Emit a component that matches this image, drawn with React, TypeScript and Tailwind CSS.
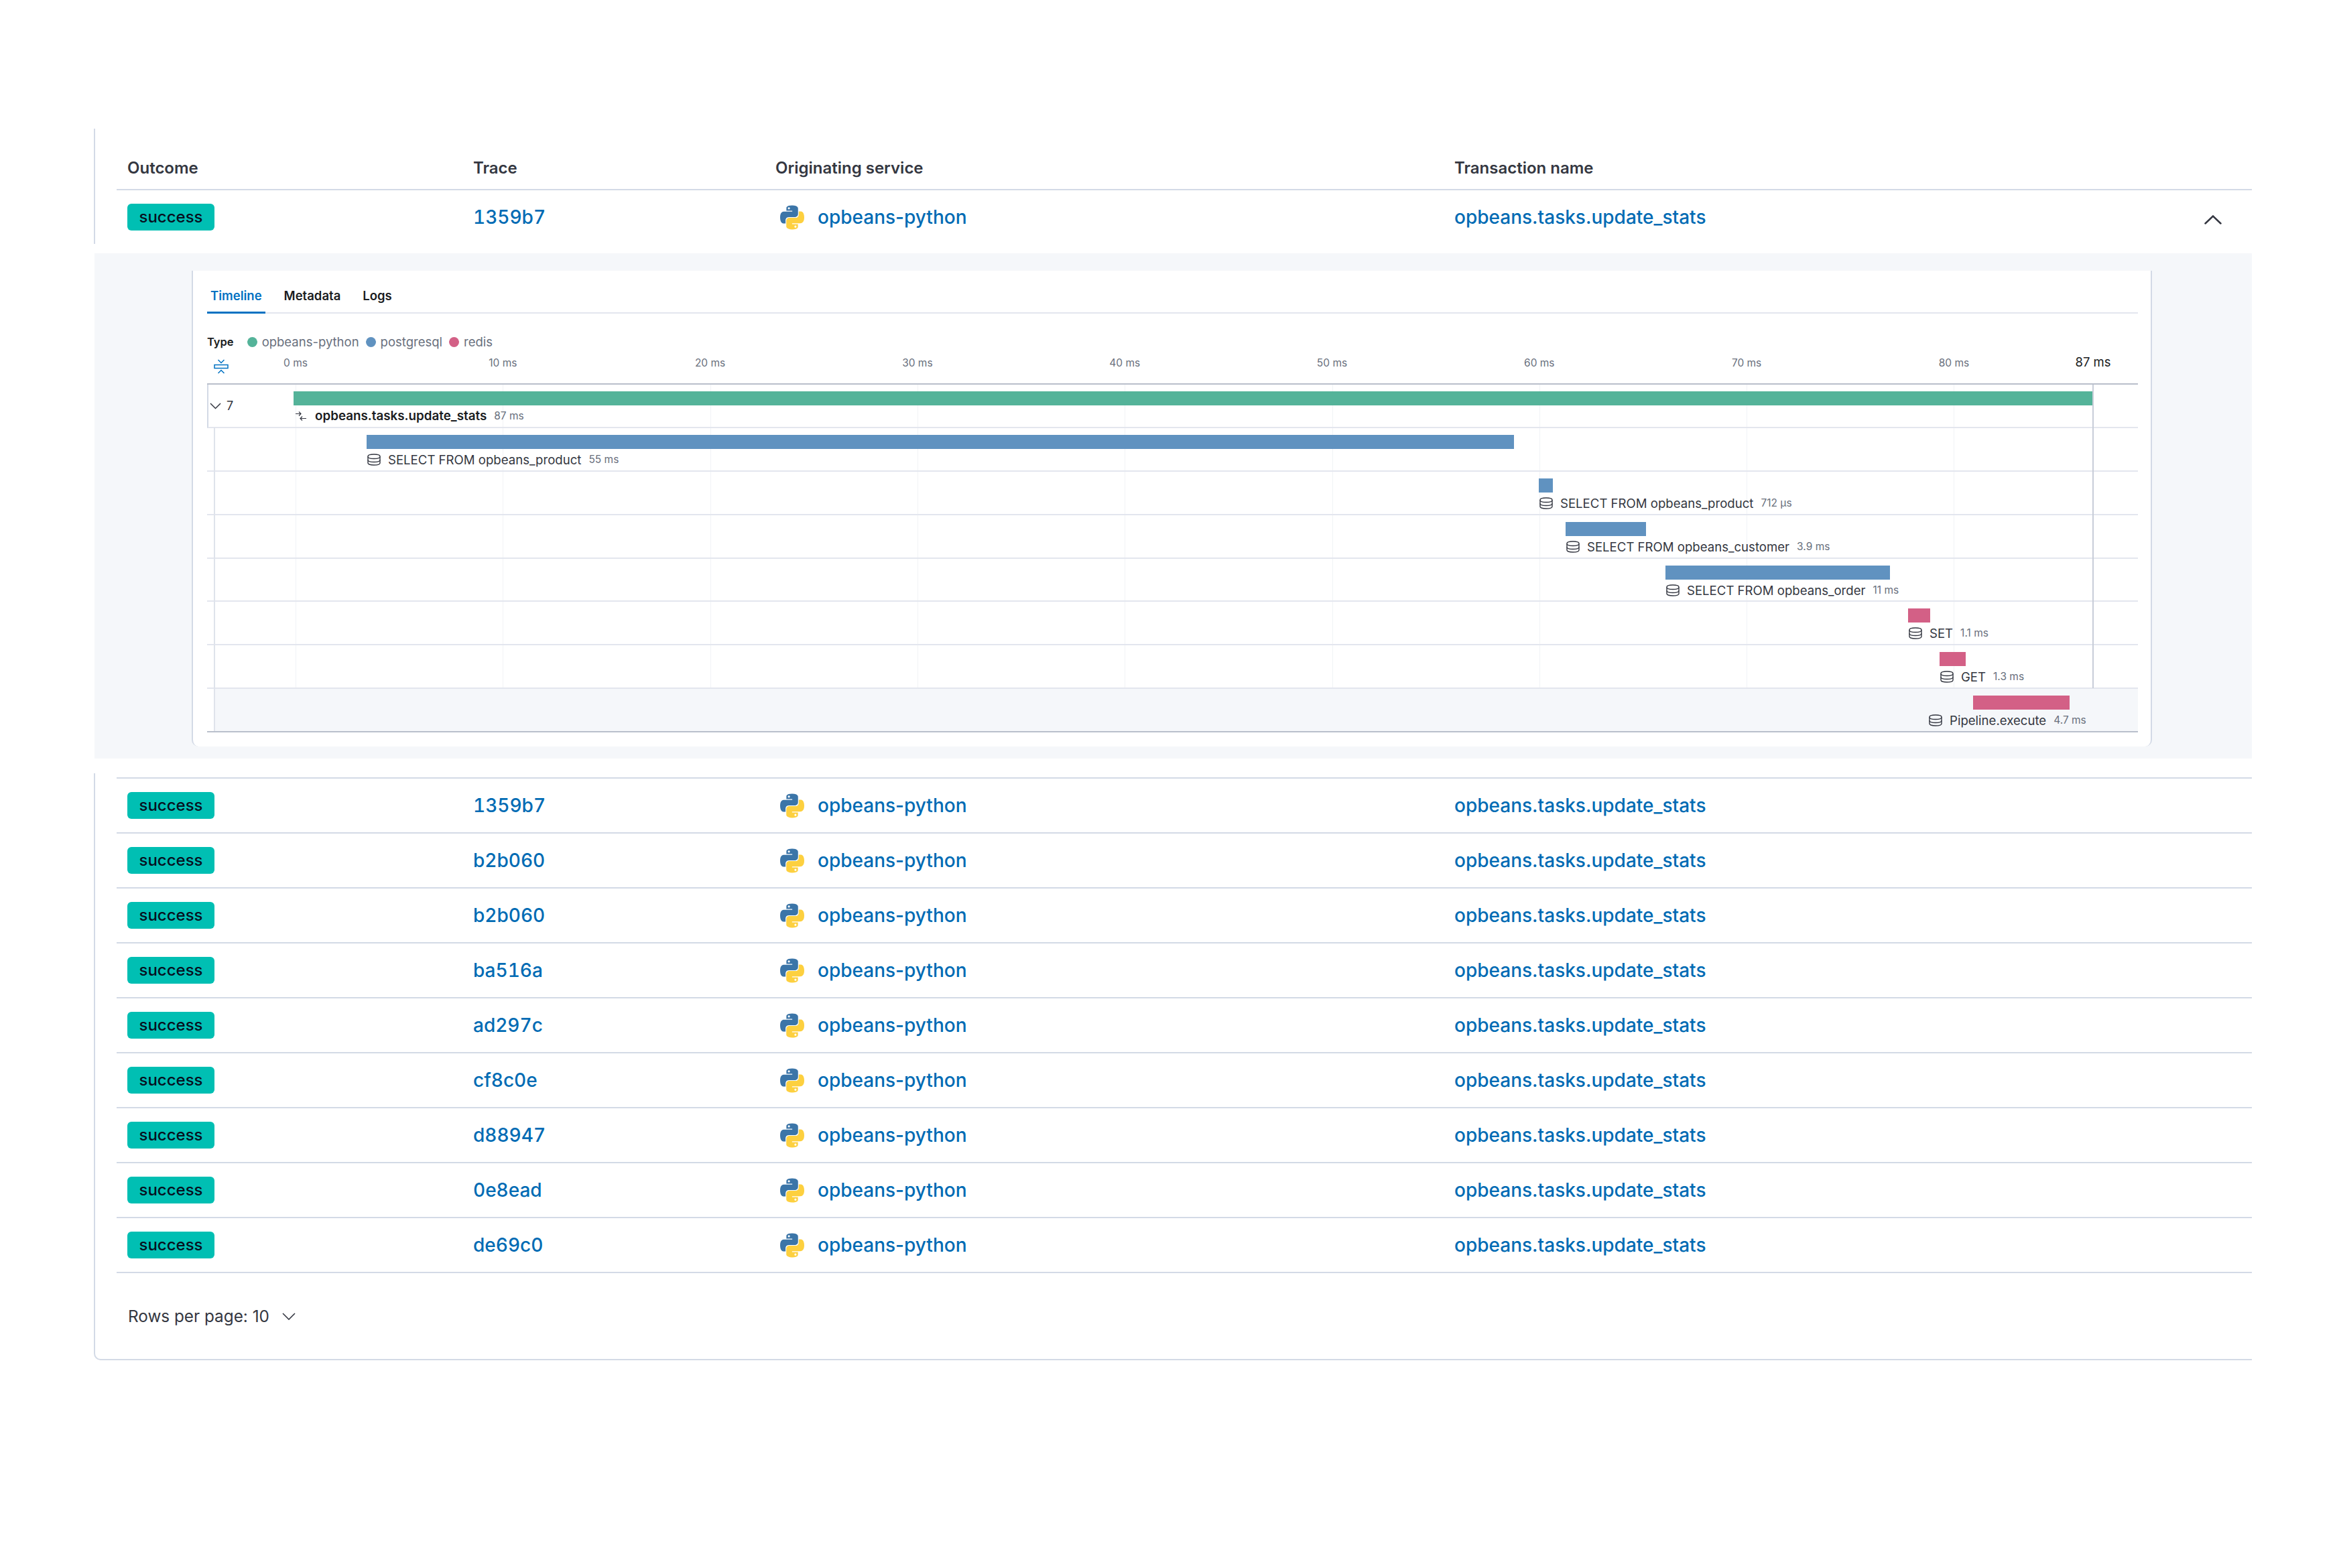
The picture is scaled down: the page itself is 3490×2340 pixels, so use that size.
import React from 'react';

const CHART_LEFT = 309;
const tickX = (ms: number) => 441 - CHART_LEFT + ms * 30.93;

const spans = [
  { start: 438, end: 3123, labelX: 441, name: 'opbeans.tasks.update_stats', duration: '87 ms', color: 'bg-[#54b399]', root: true },
  { start: 547, end: 2259, labelX: 548, name: 'SELECT FROM opbeans_product', duration: '55 ms', color: 'bg-[#6092c0]' },
  { start: 2296, end: 2317, labelX: 2297, name: 'SELECT FROM opbeans_product', duration: '712 μs', color: 'bg-[#6092c0]' },
  { start: 2336, end: 2456, labelX: 2337, name: 'SELECT FROM opbeans_customer', duration: '3.9 ms', color: 'bg-[#6092c0]' },
  { start: 2485, end: 2820, labelX: 2486, name: 'SELECT FROM opbeans_order', duration: '11 ms', color: 'bg-[#6092c0]' },
  { start: 2847, end: 2880, labelX: 2848, name: 'SET', duration: '1.1 ms', color: 'bg-[#d36086]' },
  { start: 2894, end: 2933, labelX: 2895, name: 'GET', duration: '1.3 ms', color: 'bg-[#d36086]' },
  { start: 2944, end: 3088, labelX: 2878, name: 'Pipeline.execute', duration: '4.7 ms', color: 'bg-[#d36086]', selected: true },
];

const traces = ['1359b7', 'b2b060', 'b2b060', 'ba516a', 'ad297c', 'cf8c0e', 'd88947', '0e8ead', 'de69c0'];

const PythonIcon = () => (
  <svg width="36" height="37" viewBox="0 0 110 110" className="shrink-0">
    <path
      fillRule="evenodd"
      fill="#3b75a8"
      d="M54.9 0C26.8 0 28.6 12.2 28.6 12.2l.03 12.6h26.8v3.8H17.9S0 26.6 0 54.9c0 28.3 15.6 27.3 15.6 27.3h9.3V69.1s-.5-15.6 15.4-15.6h26.6s14.9.24 14.9-14.4V14.9S84.1 0 54.9 0zM40.1 8.5a4.8 4.8 0 1 1 0 9.6 4.8 4.8 0 0 1 0-9.6z"
    />
    <path
      fillRule="evenodd"
      fill="#fdd03f"
      transform="rotate(180 55 55)"
      d="M54.9 0C26.8 0 28.6 12.2 28.6 12.2l.03 12.6h26.8v3.8H17.9S0 26.6 0 54.9c0 28.3 15.6 27.3 15.6 27.3h9.3V69.1s-.5-15.6 15.4-15.6h26.6s14.9.24 14.9-14.4V14.9S84.1 0 54.9 0zM40.1 8.5a4.8 4.8 0 1 1 0 9.6 4.8 4.8 0 0 1 0-9.6z"
    />
  </svg>
);

const StorageIcon = () => (
  <svg width="20" height="18" viewBox="0 0 20 18" fill="none" stroke="#343741" strokeWidth="1.4" className="shrink-0">
    <path d="M1 4c0-2 4-3 9-3s9 1 9 3v10c0 2-4 3-9 3s-9-1-9-3z" />
    <path d="M1 4.5c0 2 4 3 9 3s9-1 9-3" />
    <path d="M1 9.5c0 2 4 3 9 3s9-1 9-3" />
  </svg>
);

const TransactionIcon = () => (
  <svg width="16" height="14" viewBox="0 0 16 14" fill="none" stroke="#343741" strokeWidth="1.2" className="shrink-0">
    <path d="M0 3.5h8M5 .5l3 3-3 3" />
    <path d="M16 10.5H7M10 7.5l-3 3 3 3" />
  </svg>
);

const CollapseIcon = () => (
  <svg width="22" height="22" viewBox="0 0 22 22" fill="none" stroke="#0071c2" strokeWidth="1.5">
    <path d="M6.5 1l4.5 4.5L15.5 1" />
    <rect x="1" y="8.5" width="20" height="5" />
    <path d="M6.5 21l4.5-4.5 4.5 4.5" />
  </svg>
);

const Badge = () => (
  <span className="flex h-[40px] w-[130px] items-center justify-center rounded-[6px] bg-[#00bfb3] text-[24px] font-medium text-[#07101f]">
    success
  </span>
);

const RowCells = ({ trace }: { trace: string }) => (
  <>
    <div className="flex items-center">
      <Badge />
    </div>
    <a className="font-medium tabular-nums text-[#006bb4]">{trace}</a>
    <div className="flex items-center gap-[20px] pl-[7px] font-medium text-[#006bb4]">
      <PythonIcon />
      <span>opbeans-python</span>
    </div>
    <a className="font-medium text-[#006bb4]">opbeans.tasks.update_stats</a>
  </>
);

const LegendItem = ({ color, label }: { color: string; label: string }) => (
  <div className="flex items-center gap-[7px]">
    <span className={`h-[15px] w-[15px] rounded-full ${color}`} />
    <span className="text-[#69707d]">{label}</span>
  </div>
);

const Timeline = () => (
  <div className="relative">
    {/* axis */}
    <div className="relative h-[50px]">
      <div className="absolute left-[10px] top-[14px]">
        <CollapseIcon />
      </div>
      {[0, 10, 20, 30, 40, 50, 60, 70, 80].map((ms) => (
        <span
          key={ms}
          className="absolute top-[10px] -translate-x-1/2 whitespace-nowrap text-[15.5px] leading-[20px] text-[#69707d]"
          style={{ left: tickX(ms) }}
        >
          {ms} ms
        </span>
      ))}
      <span className="absolute left-[2814px] top-[6px] -translate-x-1/2 whitespace-nowrap text-[18.5px] leading-[24px] text-[#1a1c21]">
        87 ms
      </span>
    </div>

    {/* rows */}
    <div className="relative border-y-2 border-[#b9bfcb]">
      {/* grid lines lie under the rows */}
      {[0, 10, 20, 30, 40, 50, 60, 70, 80].map((ms) => (
        <div key={ms} className="absolute inset-y-0 w-[1px] bg-[#f1f3f6]" style={{ left: tickX(ms) }} />
      ))}
      {spans.map((s, i) => (
        <div
          key={i}
          className={`relative pt-[10px] ${i < spans.length - 1 ? 'h-[64.9px] border-b-2 border-[#e3e6ee]' : 'h-[62.7px]'} ${
            s.root ? 'border-l-2 border-l-[#d3dae6]' : ''
          }`}
        >
          {s.selected && <div className="absolute inset-y-0 left-[12px] right-0 bg-[#f5f7fa]" />}
          {s.root && (
            <div className="absolute left-[2px] top-[20px] flex items-center gap-[8px] text-[18px] leading-[24px] text-[#343741]">
              <svg width="17" height="10" viewBox="0 0 17 10" fill="none" stroke="#343741" strokeWidth="1.5">
                <path d="M1 1l7.5 7.5L16 1" />
              </svg>
              <span>7</span>
            </div>
          )}
          <div
            className={`relative h-[21px] ${s.color}`}
            style={{ marginLeft: s.start - CHART_LEFT - (s.root ? 2 : 0), width: s.end - s.start }}
          />
          <div
            className="relative mt-[4px] flex h-[24px] items-center whitespace-nowrap"
            style={{ marginLeft: s.labelX - CHART_LEFT - (s.root ? 2 : 0) }}
          >
            {s.root ? <TransactionIcon /> : <StorageIcon />}
            <span
              className={`${s.root ? 'ml-[13px] text-[18.8px] font-semibold text-[#1a1c21]' : 'ml-[11px] text-[18.6px] text-[#343741]'}`}
            >
              {s.name}
            </span>
            <span className="ml-[11px] text-[15.5px] text-[#69707d]">{s.duration}</span>
          </div>
        </div>
      ))}
      {/* tree guide and end marker sit over the rows */}
      <div className="absolute bottom-0 left-[10px] top-[64px] w-[2px] bg-[#dfe3eb]" />
      <div className="absolute left-[2813px] top-0 h-[453px] w-[2px] bg-[#c8cdd8]" />
    </div>
  </div>
);

export default function App() {
  return (
    <div className="h-[2340px] w-[3490px] bg-white pl-[140px] pt-[192px] font-[Inter,sans-serif] text-[28px] leading-[36px]">
      <div className="w-[3220px]">
        {/* head of the table and the open row */}
        <div className="h-[172px] border-l-2 border-[#d3dae6] pl-[32px]">
          <div className="grid h-[92px] grid-cols-[516px_451px_1013px_1fr] items-end border-b-2 border-[#d3dae6] px-[16px] pb-[16px] text-[24px] font-semibold leading-[30px] text-[#343741]">
            <span>Outcome</span>
            <span>Trace</span>
            <span>Originating service</span>
            <span>Transaction name</span>
          </div>
          <div className="relative grid h-[80px] grid-cols-[516px_451px_1013px_1fr] items-center px-[16px]">
            <RowCells trace="1359b7" />
            <svg
              width="26"
              height="14"
              viewBox="0 0 26 14"
              fill="none"
              stroke="#343741"
              strokeWidth="2.5"
              strokeLinecap="round"
              className="absolute right-[45px] top-[37px]"
            >
              <path d="M1.5 12.5L13 1.5l11.5 11" />
            </svg>
          </div>
        </div>

        {/* expanded trace */}
        <div className="ml-[1px] mt-[14px] h-[754px] bg-[#f5f7fa] pl-[145px] pr-[149px] pt-[26px]">
          <div className="h-[710px] rounded-b-[10px] border-x-2 border-[#d3dae6] bg-white pl-[21px] pr-[19px] text-[18.5px] leading-[24px]">
            <div className="flex h-[64px] items-end gap-[23px] border-b-2 border-[#e3e6ee] font-semibold text-[#1a1c21]">
              <div className="-mb-[2px] flex h-[52px] items-start border-b-[3px] border-[#0071c2] px-[5px] pt-[13px] text-[#0071c2]">
                Timeline
              </div>
              <div className="flex h-[50px] items-start px-[5px] pt-[13px]">Metadata</div>
              <div className="flex h-[50px] items-start px-[5px] pt-[13px]">Logs</div>
            </div>
            <div className="mt-[30px] flex h-[24px] items-center">
              <span className="mr-[20px] text-[16.5px] font-semibold text-[#1a1c21]">Type</span>
              <div className="flex gap-[10px]">
                <LegendItem color="bg-[#54b399]" label="opbeans-python" />
                <LegendItem color="bg-[#6092c0]" label="postgresql" />
                <LegendItem color="bg-[#d36086]" label="redis" />
              </div>
            </div>
            <Timeline />
          </div>
        </div>

        {/* remaining rows */}
        <div className="mt-[22px] h-[876px] rounded-bl-[10px] border-b-2 border-l-2 border-[#d3dae6] pl-[32px] pt-[6px]">
          <div className="border-t-2 border-[#d3dae6]">
            {traces.map((t, i) => (
              <div
                key={i}
                className="grid h-[82px] grid-cols-[516px_451px_1013px_1fr] items-center border-b-2 border-[#d3dae6] px-[16px]"
              >
                <RowCells trace={t} />
              </div>
            ))}
          </div>
          <div className="flex h-[128px] items-center gap-[19px] pl-[17px] text-[24.3px] text-[#343741]">
            <span>Rows per page: 10</span>
            <svg width="20" height="11" viewBox="0 0 20 11" fill="none" stroke="#343741" strokeWidth="1.6">
              <path d="M1 1l9 9 9-9" />
            </svg>
          </div>
        </div>
      </div>
    </div>
  );
}
